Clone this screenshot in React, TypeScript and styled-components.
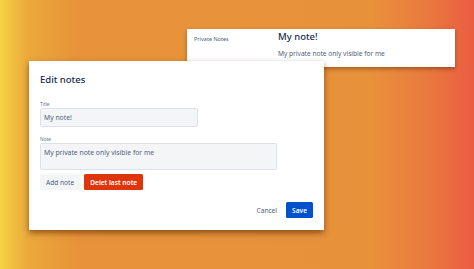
import React from 'react';
import styled, { createGlobalStyle } from 'styled-components';

const Global = createGlobalStyle`
  html, body {
    margin: 0;
    padding: 0;
  }
  body {
    font-family: "Noto Sans", "Open Sans", sans-serif;
    color: #172b4d;
    -webkit-font-smoothing: antialiased;
  }
`;

const Stage = styled.div`
  position: relative;
  width: 474px;
  height: 269px;
  overflow: hidden;
  background: linear-gradient(
    90deg,
    #f6d243 0%,
    #eba83c 6%,
    #e8933a 16%,
    #e8913b 78%,
    #e97a3e 90%,
    #ea5c41 100%
  );
`;

const NoteCard = styled.div`
  position: absolute;
  left: 187px;
  top: 29px;
  width: 268px;
  height: 38px;
  background: #ffffff;
  box-shadow: 0 2px 4px rgba(80, 30, 0, 0.45);
  display: grid;
  grid-template-columns: 84px 1fr;
  padding: 0 0 0 7px;
  box-sizing: border-box;
`;

const NoteLabel = styled.div`
  font-size: 5.5px;
  color: #505f79;
  padding-top: 6px;
`;

const NoteBody = styled.div`
  display: flex;
  flex-direction: column;
  padding-top: 1px;
`;

const NoteTitle = styled.div`
  font-size: 9.5px;
  font-weight: 500;
  color: #172b4d;
  line-height: 14px;
`;

const NoteText = styled.div`
  font-size: 6.6px;
  color: #505f79;
  margin-top: 5px;
`;

const Dialog = styled.div`
  position: absolute;
  left: 29px;
  top: 61px;
  width: 295px;
  height: 169px;
  background: #ffffff;
  box-shadow: 0 3px 6px rgba(70, 25, 0, 0.55);
  box-sizing: border-box;
  padding: 12px 11px 12px 11px;
  display: flex;
  flex-direction: column;
`;

const DialogTitle = styled.h1`
  margin: 0;
  font-size: 9.5px;
  font-weight: 500;
  color: #172b4d;
  line-height: 14px;
`;

const Field = styled.div<{ $gap: number }>`
  display: flex;
  flex-direction: column;
  margin-top: ${p => p.$gap}px;
`;

const Label = styled.label`
  font-size: 4.8px;
  color: #6b778c;
  line-height: 6px;
  margin-bottom: 1px;
`;

const Input = styled.div<{ $w: number; $h: number }>`
  width: ${p => p.$w}px;
  height: ${p => p.$h}px;
  box-sizing: border-box;
  background: #f4f5f7;
  border: 1px solid #dfe1e6;
  border-radius: 1.5px;
  font-size: 6.8px;
  color: #505f79;
  padding: 4px 3px;
  line-height: 9px;
`;

const Row = styled.div`
  display: flex;
  gap: 4px;
  margin-top: 4px;
`;

const Footer = styled.div`
  display: flex;
  justify-content: flex-end;
  align-items: center;
  gap: 9px;
  margin-top: auto;
`;

const Button = styled.button<{ $kind: 'subtle' | 'plain' | 'danger' | 'primary' }>`
  font-family: inherit;
  border: none;
  border-radius: 1.5px;
  font-size: 6.6px;
  height: 16px;
  padding: ${p => (p.$kind === 'plain' ? '0' : '0 6px')};
  cursor: pointer;
  font-weight: ${p => (p.$kind === 'danger' || p.$kind === 'primary' ? 600 : 400)};
  background: ${p =>
    p.$kind === 'danger' ? '#de350b' : p.$kind === 'primary' ? '#0052cc' : p.$kind === 'subtle' ? '#f4f5f7' : 'transparent'};
  color: ${p => (p.$kind === 'danger' || p.$kind === 'primary' ? '#ffffff' : '#505f79')};
`;

export default function App() {
  return (
    <>
      <Global />
      <Stage>
        <NoteCard>
          <NoteLabel>Private Notes</NoteLabel>
          <NoteBody>
            <NoteTitle>My note!</NoteTitle>
            <NoteText>My private note only visible for me</NoteText>
          </NoteBody>
        </NoteCard>
        <Dialog>
          <DialogTitle>Edit notes</DialogTitle>
          <Field $gap={14}>
            <Label>Title</Label>
            <Input $w={158} $h={19}>My note!</Input>
          </Field>
          <Field $gap={9}>
            <Label>Note</Label>
            <Input $w={237} $h={27}>My private note only visible for me</Input>
          </Field>
          <Row>
            <Button $kind="subtle">Add note</Button>
            <Button $kind="danger">Delet last note</Button>
          </Row>
          <Footer>
            <Button $kind="plain">Cancel</Button>
            <Button $kind="primary">Save</Button>
          </Footer>
        </Dialog>
      </Stage>
    </>
  );
}
